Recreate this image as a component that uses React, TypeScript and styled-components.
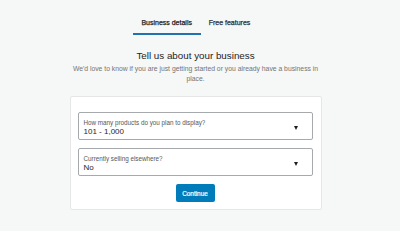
import React from "react";
import styled, { createGlobalStyle } from "styled-components";

const Global = createGlobalStyle`
  html, body { margin: 0; padding: 0; background: #f6f7f7; }
  body { font-family: "Liberation Sans", Arial, sans-serif; color: #1e1e1e; }
  * { box-sizing: border-box; }
`;

const Page = styled.div`
  width: 391px;
  height: 231px;
  display: flex;
  flex-direction: column;
  align-items: center;
  overflow: hidden;
`;

const Tabs = styled.nav`
  display: flex;
  height: 35px;
  padding-top: 14px;
`;

const Tab = styled.div<{ $active?: boolean }>`
  padding: 0 8px;
  font-size: 7px;
  font-weight: 400;
  -webkit-text-stroke: 0.25px currentColor;
  white-space: nowrap;
  color: ${(p) => (p.$active ? "#1e1e1e" : "#2c3338")};
  height: 21px;
  line-height: 18px;
  border-bottom: 2.5px solid ${(p) => (p.$active ? "#2271b1" : "transparent")};
  text-align: center;
  min-width: ${(p) => (p.$active ? "68px" : "0")};
`;

const Title = styled.h1`
  margin: 14px 0 0;
  font-size: 9.8px;
  font-weight: 400;
  line-height: 14px;
  color: #1e1e1e;
`;

const Sub = styled.p`
  margin: 1px 0 0;
  width: 256px;
  text-align: center;
  font-size: 6.8px;
  line-height: 10px;
  color: #757575;
`;

const Card = styled.div`
  margin-top: 12px;
  width: 252px;
  background: #fff;
  border: 1px solid #e6e6e6;
  border-radius: 2px;
  padding: 15px 8px 7px 7px;
  display: flex;
  flex-direction: column;
  gap: 8px;
  align-items: center;
`;

const Select = styled.div`
  align-self: stretch;
  height: 28px;
  border: 1px solid #a7aaad;
  border-radius: 2px;
  padding: 4px 14px 0 5px;
  display: flex;
  align-items: center;
  justify-content: space-between;
`;

const SelectText = styled.div`
  display: flex;
  flex-direction: column;
`;

const Label = styled.span`
  font-size: 6.3px;
  line-height: 8px;
  color: #50575e;
`;

const Value = styled.span`
  font-size: 8px;
  line-height: 10px;
  color: #1e1e1e;
`;

const Arrow = styled.span`
  width: 0;
  height: 0;
  border-left: 2.5px solid transparent;
  border-right: 2.5px solid transparent;
  border-top: 4px solid #1e1e1e;
`;

const Button = styled.button`
  width: 39px;
  height: 18px;
  background: #007cba;
  color: #fff;
  border: none;
  border-radius: 2px;
  font-family: inherit;
  font-size: 6.4px;
  font-weight: 400;
  -webkit-text-stroke: 0.2px currentColor;
  padding: 0;
`;

export default function App() {
  return (
    <>
      <Global />
      <Page>
        <Tabs>
          <Tab $active>Business details</Tab>
          <Tab>Free features</Tab>
        </Tabs>
        <Title>Tell us about your business</Title>
        <Sub>
          We'd love to know if you are just getting started or you already have a business in place.
        </Sub>
        <Card>
          <Select>
            <SelectText>
              <Label>How many products do you plan to display?</Label>
              <Value>101 - 1,000</Value>
            </SelectText>
            <Arrow />
          </Select>
          <Select>
            <SelectText>
              <Label>Currently selling elsewhere?</Label>
              <Value>No</Value>
            </SelectText>
            <Arrow />
          </Select>
          <Button>Continue</Button>
        </Card>
      </Page>
    </>
  );
}
